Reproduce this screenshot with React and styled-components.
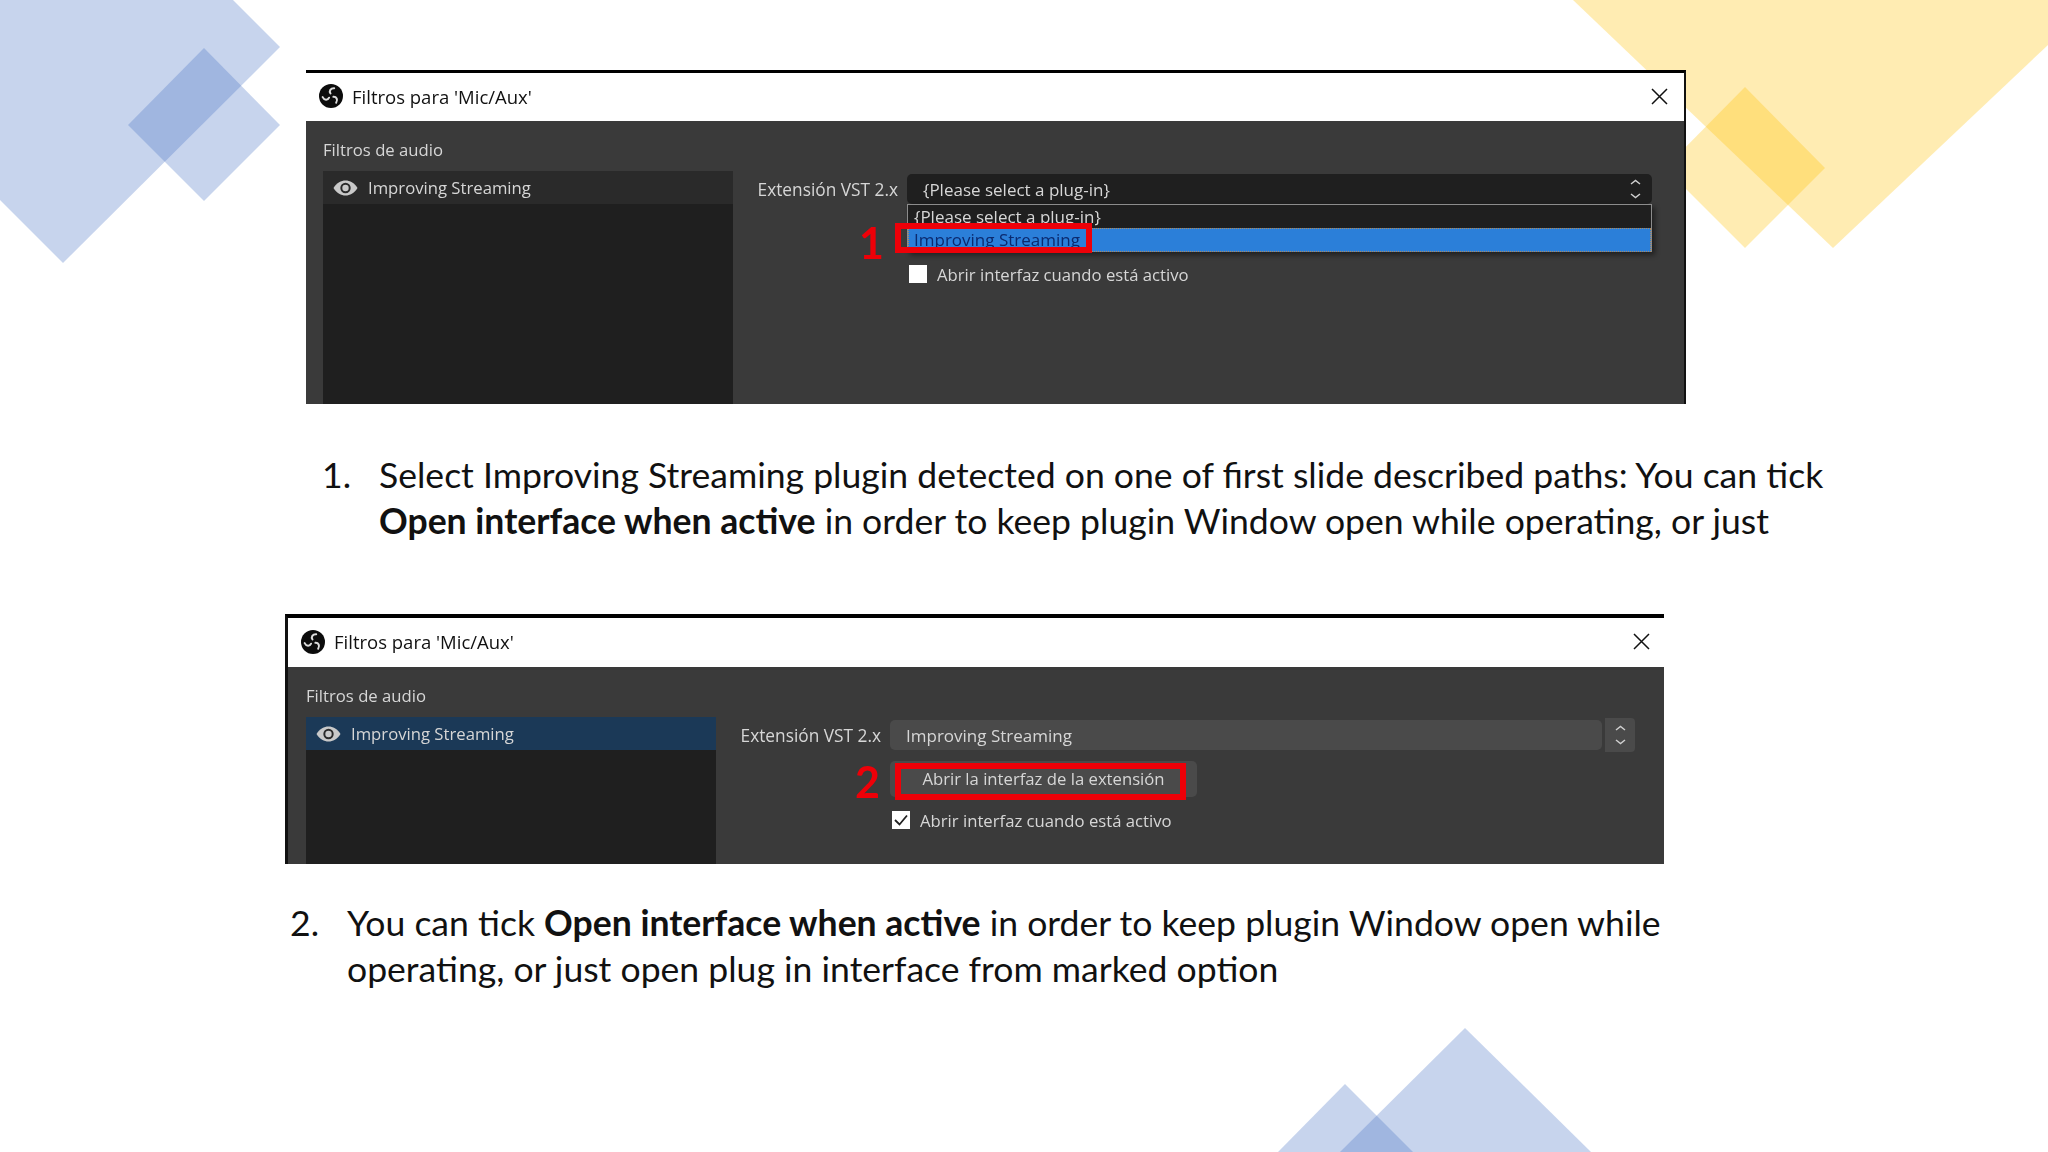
import React from "react";
import styled, { createGlobalStyle } from "styled-components";

const GlobalStyle = createGlobalStyle`
  html, body {
    margin: 0;
    padding: 0;
    background: #fff;
  }
`;

const ObsLogo = () => (
  <LogoSvg viewBox="0 0 24 24">
    <circle cx="12" cy="12" r="12" fill="#0c0c0c" />
    <g fill="none" stroke="#dcdcdc" strokeWidth="2" strokeLinecap="round">
      <path d="M11.5 9.5C9.8 7 11.5 4 15.2 4.2" />
      <path d="M11.5 9.5C9.8 7 11.5 4 15.2 4.2" transform="rotate(120 12 12)" />
      <path d="M11.5 9.5C9.8 7 11.5 4 15.2 4.2" transform="rotate(240 12 12)" />
    </g>
  </LogoSvg>
);

const EyeIcon = () => (
  <EyeSvg viewBox="0 0 25 16">
    <path d="M0.5 8C4 2.5 8 0.5 12.5 0.5S21 2.5 24.5 8C21 13.5 17 15.5 12.5 15.5S4 13.5 0.5 8Z" fill="#c9c9c9" />
    <circle cx="12.5" cy="8" r="5.2" fill="#2a2a2a" />
    <circle cx="12.5" cy="8" r="3.2" fill="#c9c9c9" />
  </EyeSvg>
);

const CloseIcon = () => (
  <CloseSvg viewBox="0 0 17 17">
    <path d="M1 1L16 16M16 1L1 16" stroke="#111" strokeWidth="1.5" fill="none" />
  </CloseSvg>
);

const Chevrons = () => (
  <ChevronSvg viewBox="0 0 11 20">
    <path d="M1 5L5.5 1.5L10 5M1 15L5.5 18.5L10 15" stroke="#cfcfcf" strokeWidth="1.5" fill="none" />
  </ChevronSvg>
);

const FilterWindow = ({ second }) => (
  <Window
    $left={second ? 285 : 306}
    $width={second ? 1379 : 1380}
    $topBar={second ? 4 : 3}
    $sideBar={second ? 3 : 0}
    $rightBar={second ? 0 : 2}
    $gap={second ? 70 : 0}
  >
    <TitleBar $h={second ? 49 : 48} $right={second ? 14 : 16}>
      <ObsLogo />
      <TitleText>Filtros para 'Mic/Aux'</TitleText>
      <CloseIcon />
    </TitleBar>
    <Body $h={second ? 197 : 283} $pad={second ? 18 : 17}>
      <FilterColumn>
        <Heading>Filtros de audio</Heading>
        <FilterList>
          <FilterRow $selected={second}>
            <EyeIcon />
            <span>Improving Streaming</span>
          </FilterRow>
        </FilterList>
      </FilterColumn>
      <Settings>
        <FieldRow>
          <FieldLabel>Extensión VST 2.x</FieldLabel>
          {second ? (
            <SelectWrap>
              <Select $light>Improving Streaming</Select>
              <Spinner>
                <Chevrons />
              </Spinner>
            </SelectWrap>
          ) : (
            <SelectWrap>
              <Select>
                {"{Please select a plug-in}"}
                <Chevrons />
              </Select>
              <Dropdown>
                <DropRow>{"{Please select a plug-in}"}</DropRow>
                <DropRow $active>Improving Streaming</DropRow>
              </Dropdown>
              <StepNumber $left={-48} $top={50}>1</StepNumber>
              <RedBox $left={-12} $top={49} $w={197} $h={30} />
            </SelectWrap>
          )}
        </FieldRow>
        {second && (
          <ButtonRow>
            <OpenButton>
              Abrir la interfaz de la extensión
              <StepNumber $left={-35} $top={2}>2</StepNumber>
              <RedBox $left={5} $top={2} $w={291} $h={37} />
            </OpenButton>
          </ButtonRow>
        )}
        <CheckRow $top={second ? 14 : 61}>
          <Checkbox>
            {second && (
              <svg viewBox="0 0 18 18" width="18" height="18">
                <path d="M3 9L7.5 13.5L15 4.5" stroke="#222" strokeWidth="1.8" fill="none" />
              </svg>
            )}
          </Checkbox>
          Abrir interfaz cuando está activo
        </CheckRow>
      </Settings>
    </Body>
  </Window>
);

const App = () => (
  <>
    <GlobalStyle />
    <Slide>
      <Decor viewBox="0 0 2048 1152">
        <g fill="#4472c4" fillOpacity="0.3">
          <polygon points="0,0 233,0 280,47 63,263 0,200" />
          <polygon points="128,125 204,48 280,125 204,201" />
          <polygon points="1465,1028 1591,1152 1340,1152" />
          <polygon points="1345,1084 1413,1152 1278,1152" />
        </g>
        <g fill="#ffc000" fillOpacity="0.3">
          <polygon points="1573,0 2048,0 2048,45 1833,248" />
          <polygon points="1745,87 1825,168 1745,248 1665,168" />
        </g>
      </Decor>
      <Content>
        <FilterWindow />
        <Step $left={322} $textLeft={379} $top={48}>
          <div>1.</div>
          <div>
            Select Improving Streaming plugin detected on one of first slide described paths: You can tick
            <br />
            <b>Open interface when active</b> in order to keep plugin Window open while operating, or just
          </div>
        </Step>
        <FilterWindow second />
        <Step $left={290} $textLeft={347} $top={36}>
          <div>2.</div>
          <div>
            You can tick <b>Open interface when active</b> in order to keep plugin Window open while
            <br />
            operating, or just open plug in interface from marked option
          </div>
        </Step>
      </Content>
    </Slide>
  </>
);

export default App;

const Slide = styled.div`
  position: relative;
  width: 2048px;
  height: 1152px;
  overflow: hidden;
  background: #fff;
`;

const Decor = styled.svg`
  position: absolute;
  top: 0;
  left: 0;
  width: 2048px;
  height: 1152px;
`;

const Content = styled.div`
  position: relative;
  display: flex;
  flex-direction: column;
  padding-top: 70px;
`;

const Window = styled.section`
  box-sizing: border-box;
  width: ${(p) => p.$width}px;
  margin: ${(p) => p.$gap}px 0 0 ${(p) => p.$left}px;
  border-top: ${(p) => p.$topBar}px solid #000;
  border-left: ${(p) => p.$sideBar}px solid #111;
  border-right: ${(p) => p.$rightBar}px solid #111;
  font-family: "Open Sans", "Noto Sans", sans-serif;
  filter: blur(0.35px);
`;

const TitleBar = styled.header`
  box-sizing: border-box;
  display: flex;
  align-items: center;
  height: ${(p) => p.$h}px;
  padding: 0 ${(p) => p.$right}px 2px 13px;
  background: #fff;
  color: #111;
`;

const LogoSvg = styled.svg`
  width: 24px;
  height: 24px;
  flex: none;
`;

const TitleText = styled.span`
  flex: 1;
  margin-left: 9px;
  font-size: 18.5px;
`;

const CloseSvg = styled.svg`
  width: 17px;
  height: 17px;
`;

const Body = styled.div`
  display: flex;
  height: ${(p) => p.$h}px;
  padding-left: ${(p) => p.$pad}px;
  background: #3a3a3a;
  color: #d6d6d6;
  font-size: 16.7px;
`;

const FilterColumn = styled.div`
  display: flex;
  flex-direction: column;
  width: 410px;
  padding-top: 17px;
`;

const Heading = styled.div`
  height: 24px;
  line-height: 24px;
  margin-bottom: 9px;
`;

const FilterList = styled.div`
  flex: 1;
  background: #1f1f1f;
`;

const FilterRow = styled.div`
  display: flex;
  align-items: center;
  gap: 10px;
  height: 33px;
  padding-left: 10px;
  background: ${(p) => (p.$selected ? "#1b3957" : "#2a2a2a")};
`;

const EyeSvg = styled.svg`
  width: 25px;
  height: 16px;
`;

const Settings = styled.div`
  display: flex;
  flex-direction: column;
  width: 919px;
  padding-top: 53px;
`;

const FieldRow = styled.div`
  display: flex;
  align-items: center;
  height: 30px;
`;

const FieldLabel = styled.div`
  width: 174px;
  padding-right: 9px;
  box-sizing: border-box;
  font-size: 17.3px;
  text-align: right;
`;

const SelectWrap = styled.div`
  position: relative;
  display: flex;
  gap: 3px;
  width: 745px;
  height: 30px;
  font-size: 17px;
`;

const Select = styled.div`
  flex: 1;
  display: flex;
  align-items: center;
  justify-content: space-between;
  padding: 0 11px 0 16px;
  border-radius: 5px;
  background: ${(p) => (p.$light ? "#4a4a4a" : "#1f1f1f")};
`;

const ChevronSvg = styled.svg`
  width: 11px;
  height: 20px;
`;

const Spinner = styled.div`
  display: flex;
  align-items: center;
  justify-content: center;
  width: 30px;
  margin: -2px 0;
  border-radius: 0 4px 4px 0;
  background: #4a4a4a;
`;

const Dropdown = styled.div`
  position: absolute;
  top: 100%;
  left: 0;
  right: 0;
  box-sizing: border-box;
  height: 48px;
  border: 1px solid #8c8c8c;
  background: #1f1f1f;
  box-shadow: 3px 3px 5px rgba(0, 0, 0, 0.45);
`;

const DropRow = styled.div`
  box-sizing: border-box;
  height: ${(p) => (p.$active ? 24 : 23)}px;
  padding-left: 6px;
  line-height: 23px;
  overflow: hidden;
  color: ${(p) => (p.$active ? "#0b2a6f" : "#d6d6d6")};
  background: ${(p) => (p.$active ? "#2b7fd9" : "transparent")};
  outline: ${(p) => (p.$active ? "1px dotted #b08a5c" : "none")};
  outline-offset: -1px;
`;

const RedBox = styled.div`
  position: absolute;
  left: ${(p) => p.$left}px;
  top: ${(p) => p.$top}px;
  width: ${(p) => p.$w}px;
  height: ${(p) => p.$h}px;
  box-sizing: border-box;
  border: 6px solid #ee0008;
`;

const StepNumber = styled.div`
  position: absolute;
  left: ${(p) => p.$left}px;
  top: ${(p) => p.$top}px;
  font-family: Lato, sans-serif;
  font-size: 43px;
  font-weight: 700;
  line-height: 38px;
  color: #ee0008;
`;

const ButtonRow = styled.div`
  display: flex;
  margin: 11px 0 0 174px;
`;

const OpenButton = styled.div`
  position: relative;
  box-sizing: border-box;
  width: 307px;
  height: 36px;
  line-height: 36px;
  text-align: center;
  border-radius: 5px;
  background: #4a4a4a;
`;

const CheckRow = styled.div`
  display: flex;
  align-items: center;
  gap: 10px;
  height: 18px;
  margin: ${(p) => p.$top}px 0 0 176px;
`;

const Checkbox = styled.span`
  display: block;
  width: 18px;
  height: 18px;
  background: #fff;
`;

const Step = styled.div`
  display: grid;
  grid-template-columns: ${(p) => p.$textLeft - p.$left}px auto;
  margin: ${(p) => p.$top}px 0 0 ${(p) => p.$left}px;
  font-family: Lato, "Noto Sans", sans-serif;
  font-size: 35.57px;
  line-height: 46px;
  color: #111;
  white-space: nowrap;
  b {
    font-weight: 700;
  }
`;
